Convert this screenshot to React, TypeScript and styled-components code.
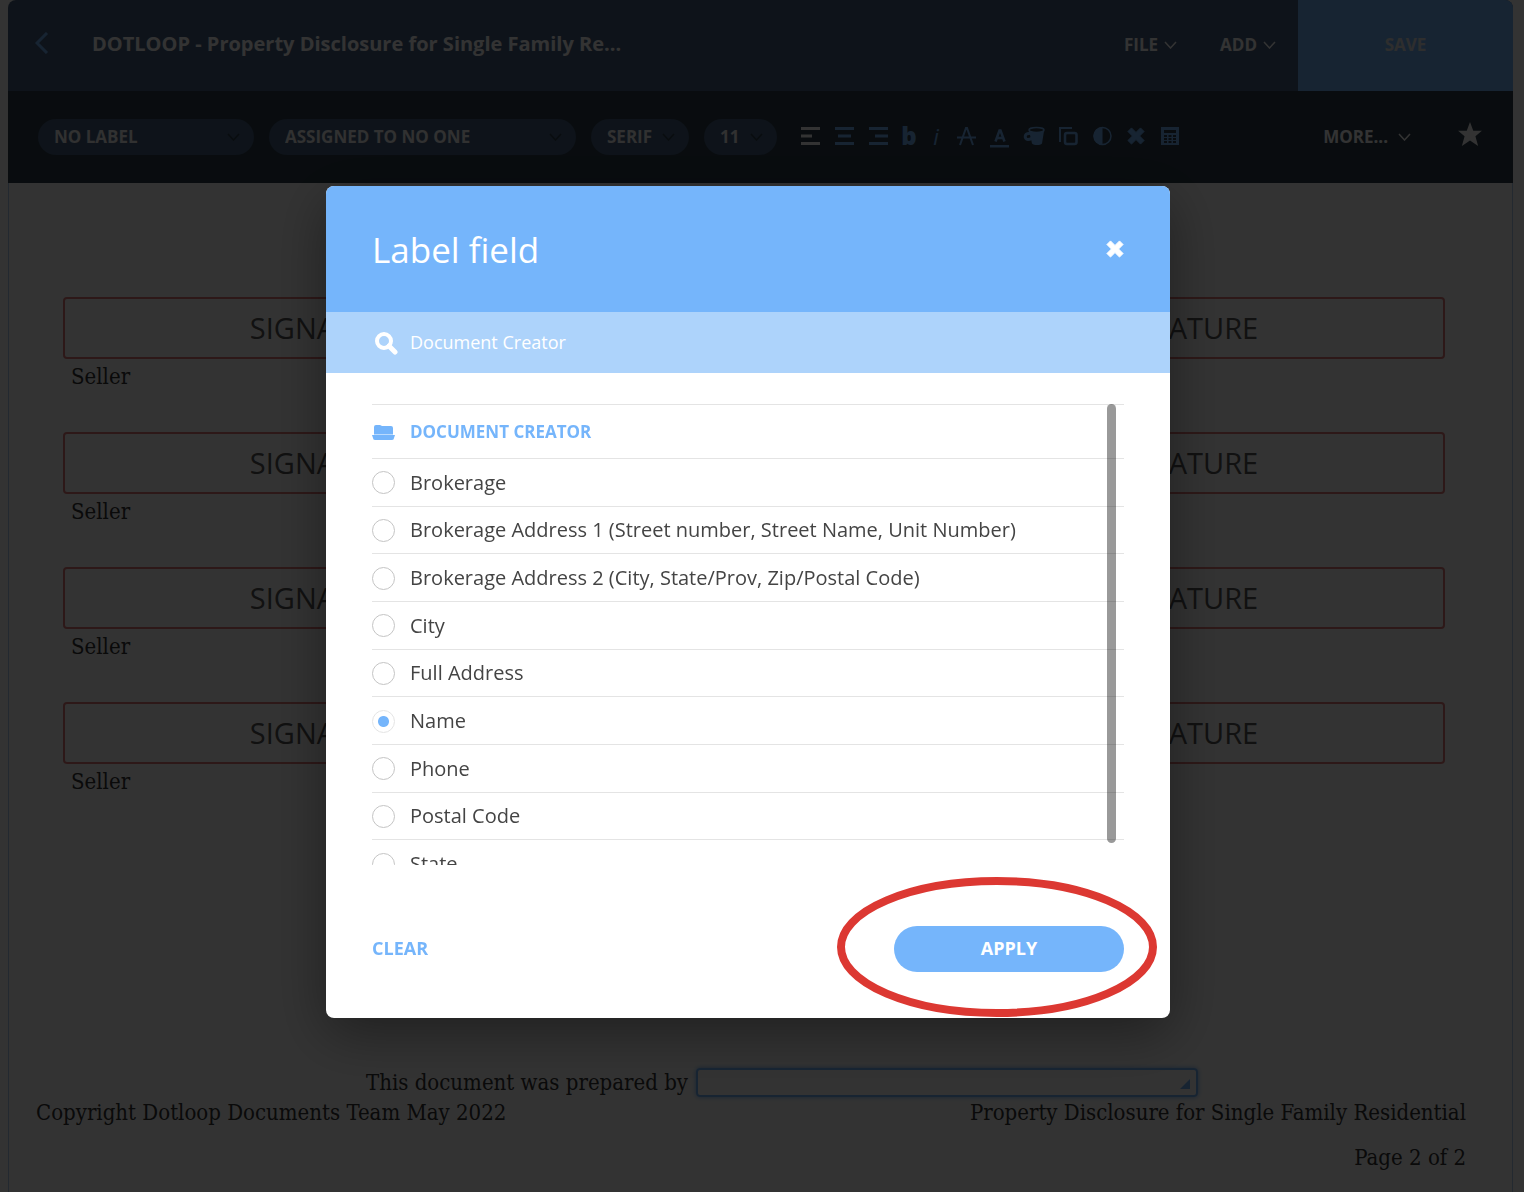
import React, { useState } from "react";
import styled, { createGlobalStyle, css } from "styled-components";

const blue = "#75b5fb";
const navy = "#465f80";
const sans = `"Open Sans", "Noto Sans", sans-serif`;
const serif = `"DejaVu Serif Condensed", "Liberation Serif", serif`;

const GlobalStyle = createGlobalStyle`
  *, *::before, *::after { box-sizing: border-box; }
  body { margin: 0; background: #fcfcfc; font-family: ${sans}; }
  button, input, select { font-family: inherit; }
`;

const Shell = styled.div`
  min-height: 100vh;
  padding: 0 11px 0 8px;
  display: flex;
  flex-direction: column;
`;

const TopBar = styled.header`
  display: flex;
  align-items: stretch;
  height: 91px;
  background: ${navy};
  border-radius: 8px 8px 0 0;
  overflow: hidden;
`;

const plainButton = css`
  border: 0;
  padding: 0;
  background: none;
  cursor: pointer;
`;

const BackButton = styled.button`
  ${plainButton}
  width: 68px;
  padding-bottom: 2px;
  color: ${blue};
`;

const Title = styled.h1`
  flex: 1;
  margin: 0;
  padding: 0 0 4px 16px;
  align-self: center;
  color: #fff;
  font-size: 20px;
  line-height: 28px;
  font-weight: 700;
  white-space: nowrap;
`;

const MenuButton = styled.button`
  ${plainButton}
  display: flex;
  align-items: center;
  gap: 6px;
  padding-bottom: 2px;
  color: #fff;
  font-size: 17px;
  line-height: 24px;
  font-weight: 700;
`;

const Menus = styled.nav`
  display: flex;
  gap: 43px;
  padding-right: 22px;
`;

const SaveButton = styled.button`
  ${plainButton}
  width: 215px;
  padding-bottom: 2px;
  background: ${blue};
  color: #e4e4e4;
  font-size: 17px;
  font-weight: 700;
`;

const Toolbar = styled.div`
  display: flex;
  align-items: center;
  height: 92px;
  padding: 0 30px;
  background: #2d3f4b;
`;

const Pills = styled.div`
  display: flex;
  gap: 15px;
`;

const Pill = styled.div<{ $width: number }>`
  display: flex;
  align-items: center;
  width: ${(p) => p.$width}px;
  height: 36px;
  padding-right: 14px;
  border-radius: 18px;
  background: ${navy};
  color: #2d3f4b;
`;

const PillSelect = styled.select`
  flex: 1;
  min-width: 0;
  height: 36px;
  padding: 0 0 2px 16px;
  border: 0;
  border-radius: 18px;
  appearance: none;
  background: none;
  color: #f2f2f2;
  font-size: 17px;
  font-weight: 700;
`;

const Tools = styled.div`
  display: flex;
  align-items: center;
  gap: 14px;
  flex: 1;
  padding: 0 0 2px 23px;
`;

const Tool = styled.button<{ $active?: boolean; $width?: number }>`
  ${plainButton}
  display: flex;
  justify-content: center;
  align-items: center;
  width: ${(p) => p.$width ?? 20}px;
  height: 20px;
  color: ${(p) => (p.$active ? "#fff" : blue)};
  font-size: 24px;
  line-height: 20px;
`;

const BoldMark = styled.b`
  font-weight: 800;
`;

const ItalicMark = styled.i`
  font-size: 22px;
`;

const MoreGroup = styled.div`
  display: flex;
  align-items: center;
  gap: 46px;
`;

const MoreButton = styled(MenuButton)`
  gap: 10px;
  padding: 0;
`;

const StarButton = styled.button`
  ${plainButton}
  display: flex;
  padding-bottom: 6px;
  color: #fff;
`;

const Page = styled.main`
  flex: 1;
  padding: 114px 46px 20px 27px;
  border: solid #b0ccf0;
  border-width: 0 1px;
  background: #fff;
  color: #333;
  font-family: ${serif};
  font-size: 22px;
  line-height: 29px;
`;

const Signatures = styled.div`
  padding: 0 21px 0 27px;
`;

const SignatureRow = styled.section`
  display: grid;
  grid-template-columns: 530px 530px;
  justify-content: space-between;
  height: 135px;
`;

const SignatureBox = styled.button`
  display: block;
  width: 100%;
  height: 62px;
  padding: 0 0 2px;
  border: 2px solid #e07a78;
  border-radius: 4px;
  background: none;
  color: #555;
  font-family: ${sans};
  font-size: 29px;
  font-weight: 400;
`;

const SignatureLabel = styled.div`
  padding: 3px 8px;
`;

const Prepared = styled.div`
  display: flex;
  align-items: center;
  justify-content: center;
  gap: 8px;
  padding-top: 231px;
  padding-left: 62px;
`;

const FieldBox = styled.span`
  display: flex;
  align-items: flex-end;
  width: 502px;
  height: 29px;
  padding: 0 6px 6px 0;
  border: 2px solid ${blue};
  border-radius: 4px;
  box-shadow: 0 0 5px ${blue};
  color: ${blue};
`;

const FieldInput = styled.input`
  flex: 1;
  min-width: 0;
  height: 19px;
  border: 0;
  background: none;
`;

const PageFooter = styled.footer`
  display: flex;
  justify-content: space-between;
  padding-top: 1px;
`;

const FooterRight = styled.div`
  text-align: right;
`;

const PageNumber = styled.div`
  padding-top: 16px;
`;

const Overlay = styled.div`
  position: fixed;
  inset: 0;
  display: flex;
  justify-content: center;
  align-items: flex-start;
  padding: 186px 28px 0 0;
  background: rgba(0, 0, 0, 0.8);
`;

const Dialog = styled.section`
  width: 844px;
  max-width: 100%;
  border-radius: 8px;
  background: #fff;
  box-shadow: 0 15px 55px rgba(0, 0, 0, 0.4);
`;

const DialogHeader = styled.header`
  display: flex;
  align-items: center;
  justify-content: space-between;
  height: 126px;
  padding: 0 46px;
  border-radius: 8px 8px 0 0;
  background: ${blue};
  color: #fff;
`;

const DialogTitle = styled.h2`
  margin: 0;
  padding-top: 2px;
  font-size: 35px;
  line-height: 48px;
  font-weight: 400;
`;

const CloseButton = styled.button`
  ${plainButton}
  display: flex;
  color: #fff;
`;

const SearchBar = styled.label`
  display: flex;
  align-items: center;
  gap: 12px;
  height: 61px;
  padding: 0 46px 0 48px;
  background: #add3fb;
  color: #fff;
`;

const SearchInput = styled.input`
  flex: 1;
  min-width: 0;
  padding: 0 0 2px;
  border: 0;
  outline: 0;
  background: none;
  color: #fff;
  font-size: 18px;
  line-height: 28px;
`;

const DialogBody = styled.div`
  padding: 31px 46px 46px;
`;

const ListFrame = styled.div`
  position: relative;
`;

const ListViewport = styled.div`
  height: 461px;
  overflow-y: auto;
  scrollbar-width: none;
`;

const ScrollThumb = styled.div`
  position: absolute;
  top: 0;
  right: 8px;
  width: 9px;
  height: 439px;
  border-radius: 5px;
  background: rgba(0, 0, 0, 0.4);
`;

const GroupHeading = styled.h3`
  display: flex;
  align-items: center;
  gap: 14px;
  height: 54px;
  margin: 0;
  border-top: 1px solid #e4e4e4;
  color: ${blue};
  font-size: 17px;
  font-weight: 700;
`;

const OptionList = styled.div`
  display: grid;
  grid-auto-rows: 1fr;
  height: 429px;
`;

const Option = styled.label`
  display: flex;
  align-items: center;
  gap: 15px;
  padding-top: 1px;
  border-top: 1px solid #e4e4e4;
  color: #444;
  font-size: 20px;
  line-height: 28px;
  cursor: pointer;
`;

const Radio = styled.input`
  appearance: none;
  width: 23px;
  height: 23px;
  margin: 0;
  border: 1px solid #c4c4c4;
  border-radius: 50%;
  background: #fff;

  &:checked {
    border-color: #e4e4e4;
    background: radial-gradient(circle, ${blue} 5px, #fff 6px);
  }
`;

const Actions = styled.footer`
  display: flex;
  align-items: center;
  justify-content: space-between;
  padding-top: 61px;
`;

const ClearButton = styled.button`
  ${plainButton}
  padding-bottom: 2px;
  color: ${blue};
  font-size: 18px;
  font-weight: 700;
`;

const ApplySlot = styled.div`
  position: relative;
`;

const ApplyButton = styled.button`
  ${plainButton}
  display: block;
  width: 230px;
  height: 46px;
  padding-bottom: 2px;
  border-radius: 23px;
  background: ${blue};
  color: #fff;
  font-size: 18px;
  font-weight: 700;
`;

const Highlight = styled.svg`
  position: absolute;
  top: -49px;
  left: -57px;
  pointer-events: none;
`;

const Chevron = () => (
  <svg width="13" height="8" viewBox="0 0 13 8" fill="none" stroke="currentColor" strokeWidth="1.500" aria-hidden="true">
    <path d="M1 1l5.500 6L12 1" />
  </svg>
);

const Glyph = ({ children }: { children: React.ReactNode }) => (
  <svg width="20" height="20" viewBox="0 0 20 20" fill="currentColor" overflow="visible" aria-hidden="true">
    {children}
  </svg>
);

const Cross = ({ size }: { size: number }) => (
  <svg width={size} height={size} viewBox="0 0 20 20" fill="currentColor" aria-hidden="true">
    <path d="M5 1l5 5 5-5 4 4-5 5 5 5-4 4-5-5-5 5-4-4 5-5-5-5z" strokeLinejoin="round" stroke="currentColor" />
  </svg>
);

const tools: { name: string; active?: boolean; width?: number; icon: React.ReactNode }[] = [
  { name: "Align left", active: true, icon: <Glyph><path d="M1 1h19v3H1zM1 8.500h11v3H1zM1 16h19v3H1z" /></Glyph> },
  { name: "Align center", icon: <Glyph><path d="M1 1h19v3H1zM4 8.500h13v3H4zM1 16h19v3H1z" /></Glyph> },
  { name: "Align right", icon: <Glyph><path d="M1 1h19v3H1zM7 8.500h13v3H7zM1 16h19v3H1z" /></Glyph> },
  { name: "Bold", width: 14, icon: <BoldMark>b</BoldMark> },
  { name: "Italic", width: 12, icon: <ItalicMark>i</ItalicMark> },
  {
    name: "Strikethrough",
    icon: (
      <Glyph>
        <path d="M4 19l6-17h1l6 17M1 11.500h19" fill="none" stroke="currentColor" strokeWidth="2" />
      </Glyph>
    ),
  },
  {
    name: "Text color",
    icon: (
      <Glyph>
        <path d="M5.500 15.500l4-11h1l4 11M7 12h6" fill="none" stroke="currentColor" strokeWidth="2.500" />
        <path d="M0 19h19v2.500H0z" />
      </Glyph>
    ),
  },
  {
    name: "Fill",
    icon: (
      <Glyph>
        <path d="M5 5c4 2 11 2 15 0l-2 12.500c-2 2-8 2-10 0L7 13z" />
        <ellipse cx="12.500" cy="4" rx="7.500" ry="2.500" fill="none" stroke="currentColor" strokeWidth="1.500" />
        <path d="M6 7.500C0 7 0 13 4 13.500c3 0 4-1 5-3" fill="none" stroke="currentColor" strokeWidth="3" />
      </Glyph>
    ),
  },
  {
    name: "Copy",
    icon: (
      <Glyph>
        <path d="M2 16V2H14" fill="none" stroke="currentColor" strokeWidth="2" />
        <rect x="7" y="7" width="11.500" height="11" rx="2" fill="none" stroke="currentColor" strokeWidth="2.500" />
      </Glyph>
    ),
  },
  {
    name: "Contrast",
    icon: (
      <Glyph>
        <circle cx="10.500" cy="10" r="8.500" fill="none" stroke="currentColor" strokeWidth="1.500" />
        <path d="M10.500 1a9 9 0 0 0 0 18z" />
      </Glyph>
    ),
  },
  { name: "Delete", icon: <Cross size={18} /> },
  {
    name: "Calculate",
    icon: (
      <Glyph>
        <path
          fillRule="evenodd"
          d="M1 1h18v18H1zM4 4v3h12V4zM4 9v2h3V9zM8.500 9v2h3V9zM13 9v2h3V9zM4 12v2h3v-2zM8.500 12v2h3v-2zM13 12v2h3v-2zM4 15v2h3v-2zM8.500 15v2h3v-2zM13 15v2h3v-2z"
        />
      </Glyph>
    ),
  },
];

const pills = [
  { name: "Label", value: "NO LABEL", width: 216 },
  { name: "Assignee", value: "ASSIGNED TO NO ONE", width: 307 },
  { name: "Font", value: "SERIF", width: 98 },
  { name: "Font size", value: "11", width: 73 },
];

const options = [
  "Brokerage",
  "Brokerage Address 1 (Street number, Street Name, Unit Number)",
  "Brokerage Address 2 (City, State/Prov, Zip/Postal Code)",
  "City",
  "Full Address",
  "Name",
  "Phone",
  "Postal Code",
  "State",
];

export default function App() {
  const [selected, setSelected] = useState("Name");
  const [query, setQuery] = useState("Document Creator");
  const [scroll, setScroll] = useState(0);

  return (
    <>
      <GlobalStyle />
      <Shell>
        <TopBar>
          <BackButton aria-label="Back">
            <svg width="14" height="22" viewBox="0 0 14 22" fill="none" stroke="currentColor" strokeWidth="3" aria-hidden="true">
              <path d="M12 1L2 11l10 10" />
            </svg>
          </BackButton>
          <Title>DOTLOOP - Property Disclosure for Single Family Re...</Title>
          <Menus>
            <MenuButton>FILE <Chevron /></MenuButton>
            <MenuButton>ADD <Chevron /></MenuButton>
          </Menus>
          <SaveButton>SAVE</SaveButton>
        </TopBar>
        <Toolbar>
          <Pills>
            {pills.map((p) => (
              <Pill key={p.name} $width={p.width}>
                <PillSelect aria-label={p.name}>
                  <option>{p.value}</option>
                </PillSelect>
                <Chevron />
              </Pill>
            ))}
          </Pills>
          <Tools>
            {tools.map((t) => (
              <Tool key={t.name} aria-label={t.name} $active={t.active} $width={t.width}>
                {t.icon}
              </Tool>
            ))}
          </Tools>
          <MoreGroup>
            <MoreButton>MORE... <Chevron /></MoreButton>
            <StarButton aria-label="Favorite">
              <svg width="26" height="26" viewBox="0 0 24 24" fill="currentColor" aria-hidden="true">
                <path d="M12 1l3 8h8l-6 5 2.500 9L12 18l-7.500 5L7 14 1 9h8z" />
              </svg>
            </StarButton>
          </MoreGroup>
        </Toolbar>
        <Page>
          <Signatures>
            {[1, 2, 3, 4].map((n) => (
              <SignatureRow key={n}>
                <div>
                  <SignatureBox>SIGNATURE</SignatureBox>
                  <SignatureLabel>Seller</SignatureLabel>
                </div>
                <div>
                  <SignatureBox>SIGNATURE</SignatureBox>
                </div>
              </SignatureRow>
            ))}
          </Signatures>
          <Prepared>
            <label htmlFor="preparer">This document was prepared by</label>
            <FieldBox>
              <FieldInput id="preparer" />
              <svg width="10" height="10" viewBox="0 0 10 10" fill="currentColor" aria-hidden="true">
                <path d="M10 0v10H0z" />
              </svg>
            </FieldBox>
          </Prepared>
          <PageFooter>
            <div>Copyright Dotloop Documents Team May 2022</div>
            <FooterRight>
              <div>Property Disclosure for Single Family Residential</div>
              <PageNumber>Page 2 of 2</PageNumber>
            </FooterRight>
          </PageFooter>
        </Page>
      </Shell>
      <Overlay>
        <Dialog role="dialog" aria-modal="true" aria-labelledby="dialog-title">
          <DialogHeader>
            <DialogTitle id="dialog-title">Label field</DialogTitle>
            <CloseButton aria-label="Close">
              <Cross size={18} />
            </CloseButton>
          </DialogHeader>
          <SearchBar>
            <svg width="24" height="24" viewBox="0 0 24 24" fill="none" stroke="currentColor" aria-hidden="true">
              <circle cx="10" cy="10" r="7" strokeWidth="4" />
              <path d="M15 15l6 6" strokeWidth="5" strokeLinecap="round" />
            </svg>
            <SearchInput aria-label="Search labels" value={query} onChange={(e) => setQuery(e.target.value)} />
          </SearchBar>
          <DialogBody>
            <ListFrame>
              <ListViewport onScroll={(e) => setScroll(e.currentTarget.scrollTop)}>
                <GroupHeading>
                  <svg width="24" height="16" viewBox="0 0 24 16" fill="currentColor" aria-hidden="true">
                    <path d="M2 10V3q0-2 2-2h4l2 1h9q2 0 2 2v6z" />
                    <path d="M2 9h19v3H2z" opacity="0.500" />
                    <path d="M0 11h23l-1 3q0 2-2 2H3q-2 0-2-2z" />
                  </svg>
                  DOCUMENT CREATOR
                </GroupHeading>
                <OptionList role="radiogroup" aria-label="Document creator">
                  {options.map((o) => (
                    <Option key={o}>
                      <Radio type="radio" name="label" checked={selected === o} onChange={() => setSelected(o)} />
                      {o}
                    </Option>
                  ))}
                </OptionList>
              </ListViewport>
              <ScrollThumb style={{ marginTop: scroll }} />
            </ListFrame>
            <Actions>
              <ClearButton>CLEAR</ClearButton>
              <ApplySlot>
                <ApplyButton>APPLY</ApplyButton>
                <Highlight width="320" height="140" viewBox="0 0 320 140" fill="none" stroke="#dc3832" strokeWidth="8" aria-hidden="true">
                  <ellipse cx="160" cy="70" rx="156" ry="66" />
                </Highlight>
              </ApplySlot>
            </Actions>
          </DialogBody>
        </Dialog>
      </Overlay>
    </>
  );
}
